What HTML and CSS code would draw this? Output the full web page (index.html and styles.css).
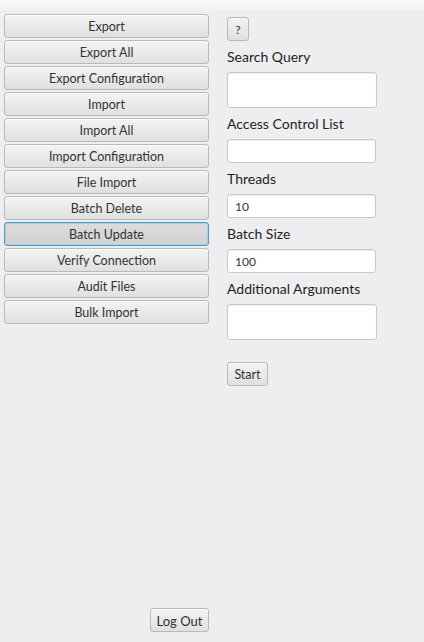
FILE: index.html
```html
<!DOCTYPE html>
<html>
<head>
<meta charset="utf-8">
<link rel="stylesheet" href="styles.css">
</head>
<body>
<div class="page">
  <div class="topstrip"></div>
  <div class="main">
    <div class="left">
      <button class="btn nav">Export</button>
      <button class="btn nav">Export All</button>
      <button class="btn nav">Export Configuration</button>
      <button class="btn nav">Import</button>
      <button class="btn nav">Import All</button>
      <button class="btn nav">Import Configuration</button>
      <button class="btn nav">File Import</button>
      <button class="btn nav">Batch Delete</button>
      <button class="btn nav focused">Batch Update</button>
      <button class="btn nav">Verify Connection</button>
      <button class="btn nav">Audit Files</button>
      <button class="btn nav">Bulk Import</button>
      <div class="spacer"></div>
      <button class="btn logout">Log Out</button>
    </div>
    <div class="right">
      <button class="btn help">?</button>
      <div class="label">Search Query</div>
      <div class="field tall"></div>
      <div class="label">Access Control List</div>
      <div class="field"></div>
      <div class="label">Threads</div>
      <div class="field">10</div>
      <div class="label">Batch Size</div>
      <div class="field">100</div>
      <div class="label">Additional Arguments</div>
      <div class="field tall"></div>
      <button class="btn start">Start</button>
    </div>
  </div>
</div>
</body>
</html>
```
FILE: styles.css
```css
html, body {
  margin: 0;
  padding: 0;
  background: #eeeef0;
}
.page {
  width: 424px;
  height: 642px;
  display: flex;
  flex-direction: column;
  font-family: Lato, "Open Sans", sans-serif;
  color: #222;
}
.topstrip {
  height: 10px;
  background: linear-gradient(#f8f8fa, #f1f1f3);
  flex: none;
}
.main {
  flex: 1;
  display: flex;
  gap: 18px;
  padding: 4px 0 10px 4px;
}
.left {
  width: 205px;
  display: flex;
  flex-direction: column;
}
.spacer {
  flex: 1;
}
.btn {
  font-family: inherit;
  font-size: 12.5px;
  color: #333;
  background: linear-gradient(#f3f3f3, #e0e0e0);
  border: 1px solid #b9b9b9;
  border-radius: 3px;
  padding: 1px 0 0;
  height: 24px;
  box-sizing: border-box;
  box-shadow: inset 0 1px 0 #fbfbfb;
}
.nav {
  width: 205px;
  margin-bottom: 2px;
}
.nav.focused {
  background: linear-gradient(#dcdcdc, #d2d2d2);
  border-color: #4b9dc3;
  box-shadow: inset 0 0 0 1px #a9cfe0;
}
.logout {
  align-self: flex-end;
  width: 59px;
  font-size: 13px;
}
.right {
  display: flex;
  flex-direction: column;
  align-items: flex-start;
  padding-top: 3px;
}
.help {
  width: 22px;
  font-size: 12px;
}
.label {
  font-size: 14px;
  line-height: 20px;
  margin: 6px 0 5px;
  color: #1e1e1e;
}
.field {
  width: 149px;
  height: 24px;
  box-sizing: border-box;
  background: #fff;
  border: 1px solid #c9c9cb;
  border-radius: 3px;
  box-shadow: inset 0 1px 1px #ececec;
  font-size: 12px;
  line-height: 23px;
  padding-left: 7px;
  color: #333;
}
.field.tall {
  width: 150px;
  height: 36px;
}
.start {
  margin-top: 22px;
  width: 41px;
}
```
